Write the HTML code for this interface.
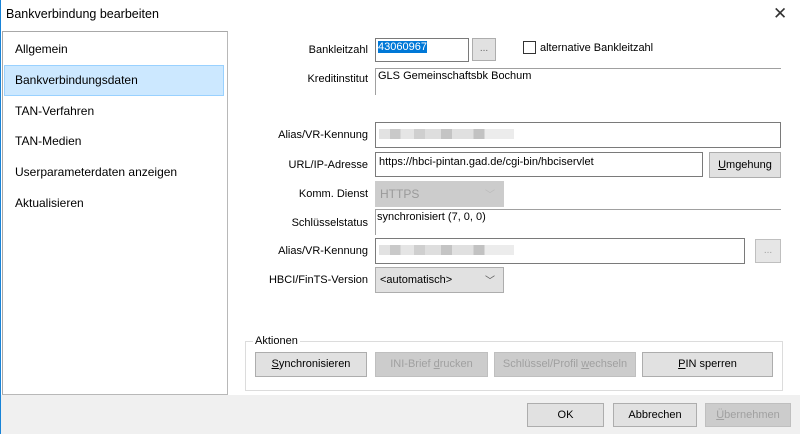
<!DOCTYPE html>
<html><head><meta charset="utf-8"><style>
*{box-sizing:border-box;margin:0;padding:0}
body{width:800px;height:434px;overflow:hidden;background:#fff;font-family:"Liberation Sans",sans-serif;position:relative}
.a{position:absolute}
.win{left:0;top:0;width:800px;height:434px;border-left:1px solid #1883d7;}
.title{left:6px;top:7px;font-size:12.5px;color:#000}
.list{left:2px;top:31px;width:226px;height:364px;border:1px solid #a8a8a8;border-right-color:#b8b8b8;border-bottom-color:#b8b8b8;background:#fff}
.li{position:absolute;left:15px;font-size:12px;color:#000}
.sel{left:4px;top:65px;width:220px;height:31px;background:#cce8ff;border:1px solid #99d1ff}
.lbl{font-size:11px;color:#000;text-align:right;width:140px}
.inp{border:1px solid #7a7a7a;background:#fff;font-size:11px;padding:3px 3px}
.btn{border:1px solid #adadad;background:#e1e1e1;font-size:11px;text-align:center;color:#000}
.dis{color:#a0a0a0;background:#cccccc;border-color:#bfbfbf}
.blur{position:absolute;top:6px;height:10px;background:linear-gradient(90deg,#e2e2e2 0 8%,#c9c9c9 8% 16%,#e5e5e5 16% 26%,#cfcfcf 26% 34%,#dedede 34% 46%,#c4c4c4 46% 54%,#e0e0e0 54% 70%,#c2c2c2 70% 78%,#ececec 78% 100%)}
.bottom{left:1px;top:395px;width:799px;height:39px;background:#f0f0f0}
u{text-decoration:underline}
</style></head><body>
<div class="a win"></div>
<div class="a title">Bankverbindung bearbeiten</div>
<div class="a" style="left:773px;top:4px;font-size:17px;color:#333">✕</div>
<div class="a list"></div>
<div class="a sel"></div>
<div class="li" style="top:42px">Allgemein</div>
<div class="li" style="top:73px">Bankverbindungsdaten</div>
<div class="li" style="top:104px">TAN-Verfahren</div>
<div class="li" style="top:134px">TAN-Medien</div>
<div class="li" style="top:165px">Userparameterdaten anzeigen</div>
<div class="li" style="top:196px">Aktualisieren</div>

<div class="a lbl" style="left:228px;top:44px">Bankleitzahl</div>
<div class="a inp" style="left:375px;top:38px;width:94px;height:24px;padding:2px 2px"><span style="background:#0078d7;color:#fff">43060967</span></div>
<div class="a btn" style="left:472px;top:38px;width:24px;height:23px;font-size:10px;color:#666;line-height:20px">...</div>
<div class="a" style="left:523px;top:41px;width:13px;height:13px;border:1px solid #333;background:#fff"></div>
<div class="a" style="left:540px;top:42px;font-size:11px">alternative Bankleitzahl</div>

<div class="a lbl" style="left:228px;top:73px">Kreditinstitut</div>
<div class="a" style="left:375px;top:68px;width:406px;height:27px;border-top:1px solid #a0a0a0;border-left:1px solid #a0a0a0"></div>
<div class="a" style="left:378px;top:70px;font-size:11px">GLS Gemeinschaftsbk Bochum</div>

<div class="a lbl" style="left:228px;top:129px">Alias/VR-Kennung</div>
<div class="a inp" style="left:375px;top:122px;width:406px;height:26px"><div class="blur" style="left:3px;width:135px"></div></div>

<div class="a lbl" style="left:228px;top:159px">URL/IP-Adresse</div>
<div class="a inp" style="left:375px;top:152px;width:328px;height:25px">https://hbci-pintan.gad.de/cgi-bin/hbciservlet</div>
<div class="a btn" style="left:709px;top:152px;width:72px;height:26px;line-height:24px"><u>U</u>mgehung</div>

<div class="a lbl" style="left:228px;top:188px">Komm. Dienst</div>
<div class="a dis" style="left:375px;top:181px;width:129px;height:26px;border:1px solid #ccc;font-size:12px;padding:5px 4px;color:#9a9a9a">HTTPS<span style="position:absolute;right:8px;top:4px;font-size:10px;color:#bbb">﹀</span></div>

<div class="a lbl" style="left:228px;top:217px">Schlüsselstatus</div>
<div class="a" style="left:375px;top:209px;width:406px;height:26px;border-top:1px solid #a0a0a0;border-left:1px solid #a0a0a0"></div>
<div class="a" style="left:377px;top:211px;font-size:11px">synchronisiert (7, 0, 0)</div>

<div class="a lbl" style="left:228px;top:245px">Alias/VR-Kennung</div>
<div class="a inp" style="left:375px;top:238px;width:370px;height:26px"><div class="blur" style="left:3px;width:135px"></div></div>
<div class="a btn dis" style="left:755px;top:239px;width:26px;height:24px;font-size:10px;line-height:22px;background:#e6e6e6">...</div>

<div class="a lbl" style="left:228px;top:274px">HBCI/FinTS-Version</div>
<div class="a" style="left:375px;top:267px;width:129px;height:26px;border:1px solid #adadad;background:#e1e1e1;font-size:11px;padding:6px 4px">&lt;automatisch&gt;<span style="position:absolute;right:8px;top:4px;font-size:10px;color:#555">﹀</span></div>

<div class="a" style="left:245px;top:341px;width:538px;height:50px;border:1px solid #dcdcdc"></div>
<div class="a" style="left:253px;top:335px;font-size:11px;background:#fff;padding:0 2px">Aktionen</div>
<div class="a btn" style="left:255px;top:352px;width:112px;height:25px;line-height:23px"><u>S</u>ynchronisieren</div>
<div class="a btn dis" style="left:375px;top:352px;width:113px;height:25px;line-height:23px">INI-Brief <u>d</u>rucken</div>
<div class="a btn dis" style="left:494px;top:352px;width:142px;height:25px;line-height:23px">Schlüssel/Profil <u>w</u>echseln</div>
<div class="a btn" style="left:642px;top:352px;width:131px;height:25px;line-height:23px"><u>P</u>IN sperren</div>

<div class="a bottom"></div>
<div class="a btn" style="left:527px;top:403px;width:77px;height:24px;line-height:22px">OK</div>
<div class="a btn" style="left:613px;top:403px;width:84px;height:24px;line-height:22px">Abbrechen</div>
<div class="a btn dis" style="left:705px;top:403px;width:86px;height:24px;line-height:22px"><u>Ü</u>bernehmen</div>
</body></html>
